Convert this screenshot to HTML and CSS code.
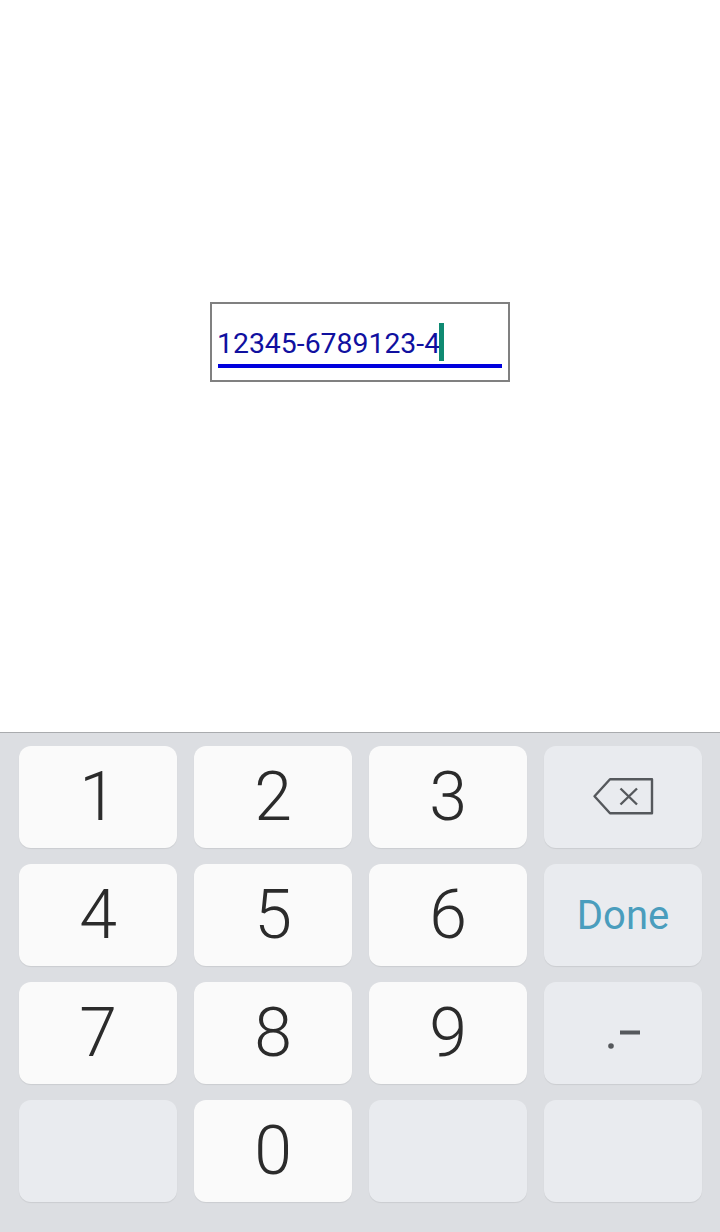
FILE: index.html
```html
<!DOCTYPE html>
<html>
    <head>
        <title>Number entry</title>
        <link rel="stylesheet" href="styles.css">
    </head>
    <body>
        <div class="entryContainer">
            <div class="entryBox">
                <div class="entryField">
                    <span class="entryText">12345-6789123-4</span><span class="caret"></span>
                </div>
            </div>
        </div>

        <!-- Keypad -->
        <div class="keypad">
            <div class="key">1</div>
            <div class="key">2</div>
            <div class="key">3</div>
            <div class="key keyGrey">
                <svg width="62" height="38" viewBox="0 0 62 38">
                    <path d="M60 1.2H18L2.5 18.2L18 35.2H60Z" fill="none" stroke="#55585c" stroke-width="2.4" stroke-linejoin="round"/>
                    <path d="M28.5 10.5L45 26.5M45 10.5L28.5 26.5" fill="none" stroke="#55585c" stroke-width="2.4"/>
                </svg>
            </div>
            <div class="key">4</div>
            <div class="key">5</div>
            <div class="key">6</div>
            <div class="key keyGrey keyDone">Done</div>
            <div class="key">7</div>
            <div class="key">8</div>
            <div class="key">9</div>
            <div class="key keyGrey">
                <svg class="dotDash" width="36" height="20" viewBox="0 0 36 20">
                    <circle cx="6" cy="17" r="2.8" fill="#55585c"/>
                    <rect x="15" y="1.5" width="20" height="4" fill="#55585c"/>
                </svg>
            </div>
            <div class="key keyGrey"></div>
            <div class="key">0</div>
            <div class="key keyGrey"></div>
            <div class="key keyGrey"></div>
        </div>
    </body>
</html>
```

FILE: styles.css
```css
body {
    margin: 0;
    background-color: #fff;
    font-family: Roboto, "Liberation Sans", sans-serif;
}
.entryContainer {
    height: 732px;
    box-sizing: border-box;
    padding-top: 302px;
    display: flex;
    justify-content: center;
    align-items: flex-start;
}
.entryBox {
    width: 300px;
    height: 80px;
    box-sizing: border-box;
    border: 2px solid #808080;
    padding: 19px 6px 0 6px;
}
.entryField {
    height: 45px;
    box-sizing: border-box;
    border-bottom: 4px solid #0000dd;
    display: flex;
    align-items: flex-start;
}
.entryText {
    font-size: 28.4px;
    line-height: 42px;
    color: #10109f;
    margin-left: -1px;
}
.caret {
    width: 5px;
    height: 38px;
    margin-left: -1px;
    background-color: #0f8a72;
}
.keypad {
    height: 500px;
    box-sizing: border-box;
    border-top: 1px solid #a9abae;
    background-color: #dcdee2;
    padding: 13px 18px 0 19px;
    display: grid;
    grid-template-columns: repeat(4, 158px);
    grid-auto-rows: 102px;
    column-gap: 17px;
    row-gap: 16px;
}
.key {
    background-color: #fafafa;
    border-radius: 12px;
    box-shadow: 0 1px 1px rgba(0,0,0,0.08);
    color: #2b2b2b;
    font-size: 68px;
    font-weight: 300;
    display: flex;
    align-items: center;
    justify-content: center;
}
.keyGrey {
    background-color: #e9ebef;
}
.keyDone {
    color: #4a9dbd;
    font-size: 40px;
    font-weight: 400;
}
.dotDash {
    margin-top: 12px;
}
```
